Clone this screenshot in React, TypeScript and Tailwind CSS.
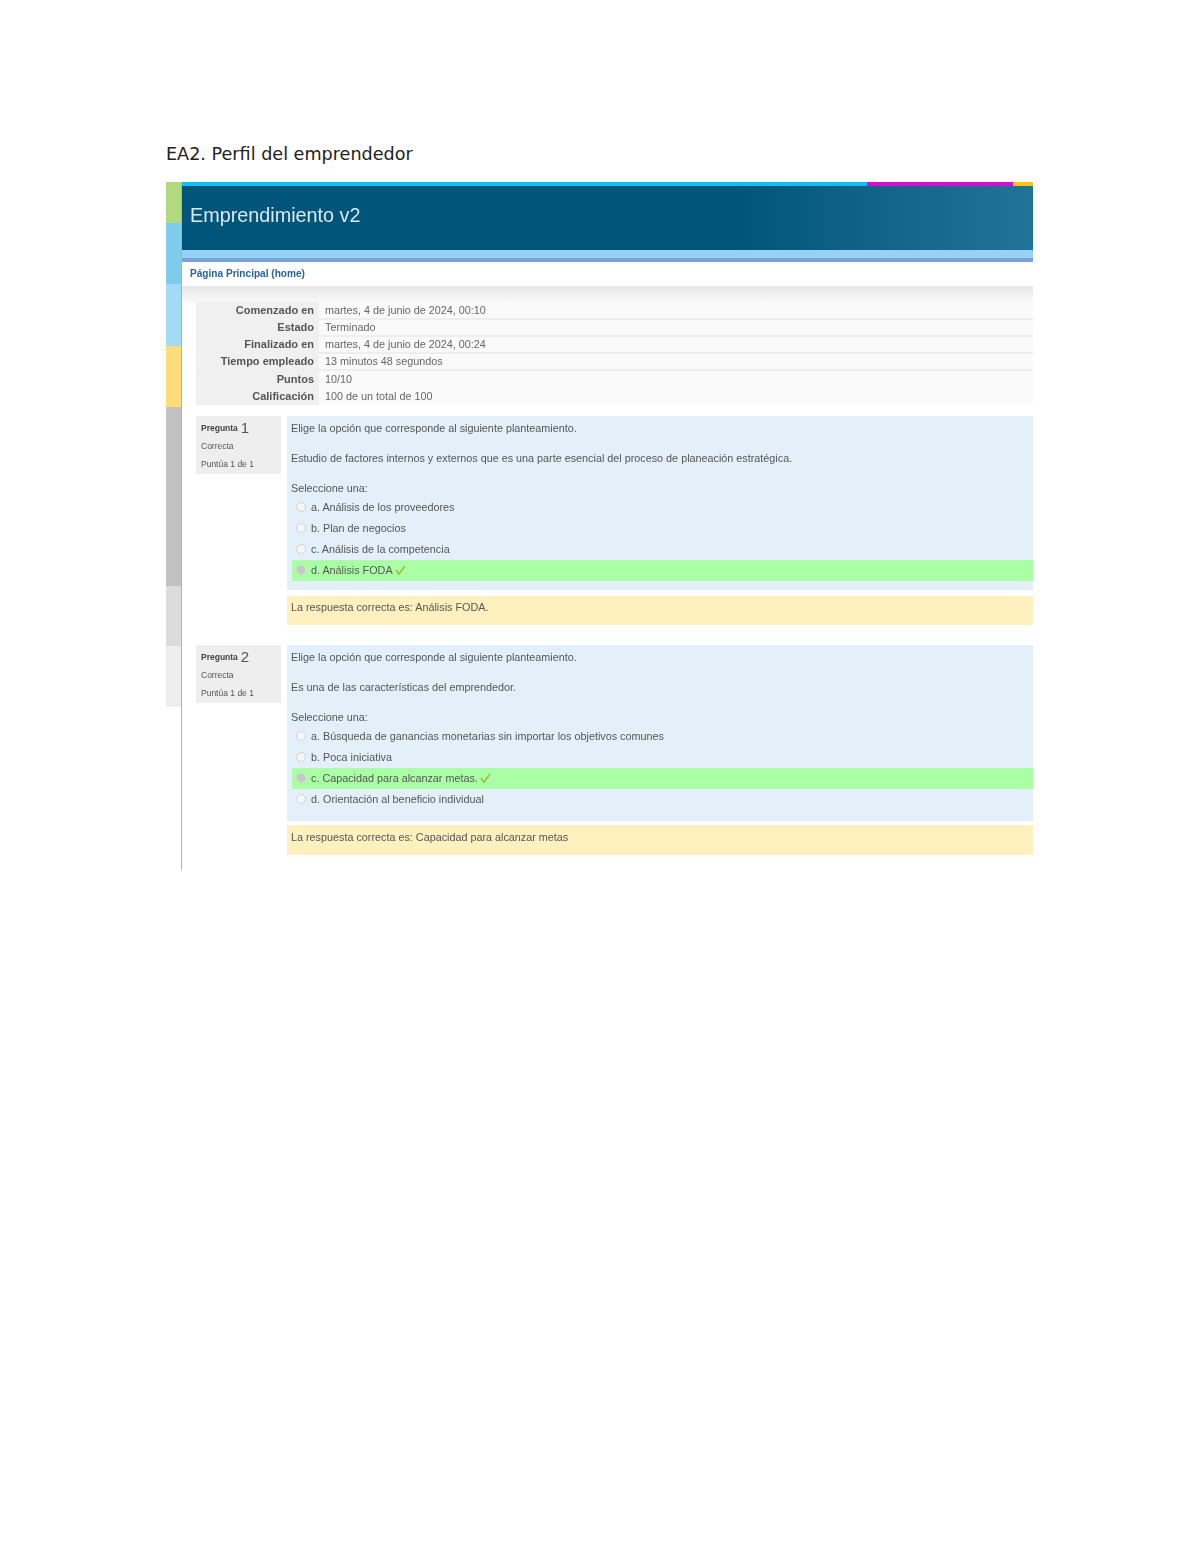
const SANS = "font-['Liberation_Sans',Arial,sans-serif]";

const rows: [string, string][] = [
  ["Comenzado en", "martes, 4 de junio de 2024, 00:10"],
  ["Estado", "Terminado"],
  ["Finalizado en", "martes, 4 de junio de 2024, 00:24"],
  ["Tiempo empleado", "13 minutos 48 segundos"],
  ["Puntos", "10/10"],
  ["Calificación", "100 de un total de 100"],
];

const sideBands = [
  "h-[41px] bg-[#b1d97f]",
  "h-[61px] bg-[#7fcbeb]",
  "h-[62px] bg-[#a3dbf5]",
  "h-[61px] bg-[#fbdd7a]",
  "h-[179px] bg-[#c2c2c2]",
  "h-[60px] bg-[#dcdcdc]",
  "h-[61px] bg-[#eeeeee]",
];

function Check() {
  return (
    <svg width="11" height="10" viewBox="0 0 11 10" className="ml-[2px] shrink-0">
      <path d="M1 5 L4 9 L10 1" fill="none" stroke="#a0c640" strokeWidth="2" />
    </svg>
  );
}

function Radio({ on }: { on?: boolean }) {
  return (
    <span
      className={
        "mr-[5px] h-[10px] w-[10px] shrink-0 rounded-full border border-[#d4d4d4] " +
        (on ? "bg-[#c4c9c4]" : "bg-[#f4f6f8]")
      }
    />
  );
}

function Option({ text, correct }: { text: string; correct?: boolean }) {
  return (
    <div className={"ml-[1px] flex h-[21px] items-center pb-[1px] pl-[4px] " + (correct ? "bg-[#aaffa6]" : "")}>
      <Radio on={correct} />
      <span className="text-[#555555]">{text}</span>
      {correct && <Check />}
    </div>
  );
}

function Question(props: {
  n: number;
  state: string;
  score: string;
  prompt: string;
  body: string;
  options: { text: string; correct?: boolean }[];
  answer: string;
  gapAfter: string;
  boxH: string;
  feedbackH: string;
  feedbackGap: string;
}) {
  return (
    <div className={"flex gap-[6px] " + props.gapAfter}>
      <div className="ml-[14px] flex h-[58px] w-[85px] shrink-0 flex-col bg-[#eeeeee] px-[5px] pt-[3px] text-[8.5px] leading-[18px] text-[#555555]">
        <div className="flex h-[18px] items-center gap-[3px]">
          <b className="text-[#444444]">Pregunta</b>
          <span className="text-[15px] text-[#555555]">{props.n}</span>
        </div>
        <div>{props.state}</div>
        <div>{props.score}</div>
      </div>
      <div className="flex-1 text-[10.8px] text-[#555555]">
        <div className={"bg-[#e3f0fa] pl-[4px] " + props.boxH}>
          <div className="h-[30px] pt-[4px] leading-[16px]">{props.prompt}</div>
          <div className="h-[30px] pt-[4px] leading-[16px]">{props.body}</div>
          <div className="h-[21px] pt-[5px] leading-[14px]">Seleccione una:</div>
          <div className="leading-[14px]">
            {props.options.map((o) => (
              <Option key={o.text} text={o.text} correct={o.correct} />
            ))}
          </div>
        </div>
        <div className={"flex items-center bg-[#fff1bf] pb-[6px] pl-[4px] " + props.feedbackGap + " " + props.feedbackH}>
          {props.answer}
        </div>
      </div>
    </div>
  );
}

export default function App() {
  return (
    <div className="min-h-[1553px] w-[1200px] bg-white pl-[166px] pt-[144px]">
      <h1 className="h-[38px] font-['DejaVu_Sans',sans-serif] text-[17.6px] leading-[20px] text-[#222222]">
        EA2. Perfil del emprendedor
      </h1>
      <div className={"flex h-[688px] w-[867px] blur-[0.4px] " + SANS}>
        <div className="w-[15px] shrink-0">
          {sideBands.map((c) => (
            <div key={c} className={c} />
          ))}
        </div>
        <div className="flex-1 border-l border-[#bdb57a]">
          <div className="flex h-[4px]">
            <div className="w-[685px] bg-[#12bdf6]" />
            <div className="w-[146px] bg-[#d40fd0]" />
            <div className="flex-1 bg-[#f8c60f]" />
          </div>
          <div className="flex h-[64px] items-center bg-gradient-to-r from-[#01557a] from-[65%] to-[#217398] pb-[5px] pl-[8px] text-[19.8px] text-[#dbe9f0]">
            Emprendimiento v2
          </div>
          <div className="h-[8px] bg-[#97d2f5]" />
          <div className="h-[4px] bg-[#79a3d6]" />
          <div className="flex h-[24px] items-center pb-[1px] pl-[8px] text-[10.1px] font-bold text-[#2a6496]">
            Página Principal (home)
          </div>
          <div className="h-[17px] bg-gradient-to-b from-[#e6e6e6] to-[#fafafa]" />

          <div className="ml-[14px] text-[10.8px]">
            {rows.map(([k, v], i) => (
              <div
                key={k}
                className={
                  "flex h-[17px] items-center " +
                  (i < 4 ? "border-b-[2px] border-[#eeeeee] bg-[#fafafa]" : "bg-[#fafafa]")
                }
              >
                <div className="flex h-[17px] w-[123px] items-center justify-end bg-[#f0f0f0] pr-[5px] text-[11px] font-bold text-[#555555]">
                  {k}
                </div>
                <div className="ml-[1px] pl-[5px] text-[#666666]">{v}</div>
              </div>
            ))}
          </div>

          <div className="h-[11px]" />
          <Question
            n={1}
            state="Correcta"
            score="Puntúa 1 de 1"
            prompt="Elige la opción que corresponde al siguiente planteamiento."
            body="Estudio de factores internos y externos que es una parte esencial del proceso de planeación estratégica."
            options={[
              { text: "a. Análisis de los proveedores" },
              { text: "b. Plan de negocios" },
              { text: "c. Análisis de la competencia" },
              { text: "d. Análisis FODA", correct: true },
            ]}
            answer="La respuesta correcta es: Análisis FODA."
            gapAfter="mb-[20px]"
            boxH="h-[174px]"
            feedbackH="h-[29px]"
            feedbackGap="mt-[6px]"
          />
          <Question
            n={2}
            state="Correcta"
            score="Puntúa 1 de 1"
            prompt="Elige la opción que corresponde al siguiente planteamiento."
            body="Es una de las características del emprendedor."
            options={[
              { text: "a. Búsqueda de ganancias monetarias sin importar los objetivos comunes" },
              { text: "b. Poca iniciativa" },
              { text: "c. Capacidad para alcanzar metas.", correct: true },
              { text: "d. Orientación al beneficio individual" },
            ]}
            answer="La respuesta correcta es: Capacidad para alcanzar metas"
            gapAfter=""
            boxH="h-[176px]"
            feedbackH="h-[30px]"
            feedbackGap="mt-[4px]"
          />
        </div>
      </div>
    </div>
  );
}
